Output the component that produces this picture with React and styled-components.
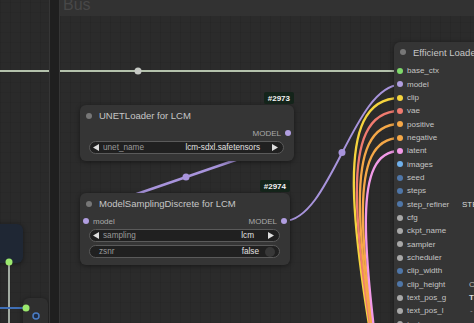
import React from "react";
import styled, { createGlobalStyle } from "styled-components";

const GlobalStyle = createGlobalStyle`
  html, body {
    margin: 0;
    padding: 0;
    background: #2a2a2a;
  }
  body {
    font-family: "Liberation Sans", Arial, sans-serif;
  }
`;

const Canvas = styled.div`
  position: relative;
  width: 474px;
  height: 323px;
  overflow: hidden;
  display: flex;
  background-color: #2a2a2a;
`;

const gridBg = `
  background-image:
    repeating-linear-gradient(90deg, rgba(0,0,0,0.07) 0 1px, transparent 1px 10px),
    repeating-linear-gradient(0deg, rgba(0,0,0,0.05) 0 1px, transparent 1px 10px);
`;

const LeftPane = styled.div`
  width: 49px;
  flex: none;
  ${gridBg}
`;

const Divider = styled.div`
  width: 9px;
  flex: none;
  background: #1f1f1f;
  border-left: 1px solid #363636;
  border-right: 1px solid #363636;
  position: relative;
  z-index: 4;
`;

const GroupArea = styled.div`
  flex: 1;
  display: flex;
  flex-direction: column;
  background: #2b2b2b;
  ${gridBg}
`;

const GroupTitle = styled.div`
  height: 16px;
  background: #323232;
  display: flex;
  align-items: flex-end;
  padding-left: 3px;
  overflow: hidden;
  font-size: 16px;
  line-height: 16px;
  color: #484848;
`;

const GroupLabel = styled.span`
  transform: translateY(-3px);
`;

const Links = styled.svg`
  position: absolute;
  left: 0;
  top: 0;
  z-index: ${(p) => p.$z ?? 1};
  pointer-events: none;
`;

const Node = styled.div`
  position: absolute;
  left: ${(p) => p.$x}px;
  top: ${(p) => p.$y}px;
  width: ${(p) => p.$w}px;
  height: ${(p) => (p.$h ? `${p.$h}px` : "auto")};
  box-sizing: border-box;
  background: ${(p) => p.$bg || "#353535"};
  border-radius: 6px;
  box-shadow: 0 1px 5px rgba(0, 0, 0, 0.45);
  display: flex;
  flex-direction: column;
  padding-bottom: ${(p) => p.$pb ?? 7}px;
  z-index: 2;
`;

const Badge = styled.div`
  position: absolute;
  right: 0;
  top: -13px;
  height: 12px;
  padding: 0 4px;
  display: flex;
  align-items: center;
  background: #14241a;
  color: #f2f2f2;
  font-size: 8px;
  font-weight: bold;
  border-radius: 2px;
`;

const Title = styled.div`
  height: ${(p) => p.$h ?? 21}px;
  display: flex;
  align-items: center;
  gap: 7px;
  padding-left: 6px;
  font-size: 9.5px;
  color: #c6c6c6;
  white-space: nowrap;
`;

const TitleDot = styled.span`
  width: 6px;
  height: 6px;
  border-radius: 50%;
  background: #777;
  flex: none;
`;

const SlotRow = styled.div`
  height: 14px;
  display: flex;
  align-items: center;
  justify-content: ${(p) => (p.$out ? "flex-end" : "space-between")};
  padding: 0 3px;
  font-size: 8px;
  color: #a9a9a9;
`;

const Slot = styled.span`
  display: flex;
  align-items: center;
  gap: 4px;
`;

const SlotDot = styled.span`
  width: 6px;
  height: 6px;
  border-radius: 50%;
  background: ${(p) => p.$c};
  flex: none;
`;

const Widgets = styled.div`
  display: flex;
  flex-direction: column;
  gap: 3px;
  padding: 1px 10px 0 9px;
`;

const Widget = styled.div`
  height: 13px;
  box-sizing: border-box;
  border: 1px solid #5a5a5a;
  border-radius: 7px;
  background: #202020;
  display: flex;
  align-items: center;
  gap: 4px;
  padding: 0 ${(p) => (p.$toggle ? 4 : 5)}px 0 ${(p) => (p.$toggle ? 9 : 3)}px;
  font-size: 8.2px;
  white-space: nowrap;
`;

const WLabel = styled.span`
  color: #9a9a9a;
`;

const WValue = styled.span`
  margin-left: auto;
  margin-right: ${(p) => p.$gap ?? 9}px;
  color: #e2e2e2;
`;

const Toggle = styled.span`
  width: 10px;
  height: 10px;
  border-radius: 50%;
  background: #383838;
  flex: none;
`;

const LoaderBody = styled.div`
  display: flex;
  flex-direction: column;
  padding: 2.33px 0 0 3px;
`;

const InputRow = styled.div`
  height: 13.33px;
  display: grid;
  grid-template-columns: 6px 51px auto;
  column-gap: 4px;
  align-items: center;
  font-size: 8px;
  color: #c4c4c4;
  white-space: nowrap;
`;

const Extra = styled.span`
  padding-left: ${(p) => p.$indent || 0}px;
  color: ${(p) => p.$c || "#dcdcdc"};
  font-weight: ${(p) => (p.$bold ? "bold" : "normal")};
`;

const Arrow = ({ dir }) => (
  <svg width="6" height="7" viewBox="0 0 6 7" style={{ flex: "none" }}>
    <path
      d={dir === "left" ? "M6 0 L0 3.5 L6 7 Z" : "M0 0 L6 3.5 L0 7 Z"}
      fill="#dedede"
    />
  </svg>
);

const C = {
  ctx: "#7fd96b",
  model: "#b09ee0",
  clip: "#f5d43e",
  vae: "#f07b70",
  cond: "#f5a848",
  latent: "#f29ae8",
  image: "#6fb0ec",
  int: "#4f76a8",
  misc: "#a8a8a8",
};

const loaderInputs = [
  { name: "base_ctx", c: C.ctx },
  { name: "model", c: C.model },
  { name: "clip", c: C.clip },
  { name: "vae", c: C.vae },
  { name: "positive", c: C.cond },
  { name: "negative", c: C.cond },
  { name: "latent", c: C.latent },
  { name: "images", c: C.image },
  { name: "seed", c: C.int },
  { name: "steps", c: C.int },
  { name: "step_refiner", c: C.int, extra: "STE" },
  { name: "cfg", c: C.misc },
  { name: "ckpt_name", c: C.misc },
  { name: "sampler", c: C.misc },
  { name: "scheduler", c: C.misc },
  { name: "clip_width", c: C.int },
  { name: "clip_height", c: C.int, extra: "C", indent: 7, ec: "#bdbdbd" },
  { name: "text_pos_g", c: C.misc, extra: "T", indent: 7, bold: true },
  { name: "text_pos_l", c: C.misc, extra: "-", indent: 8, ec: "#999" },
  { name: "text_neg_g", c: C.misc },
];

// bundle of links coming up from below into the loader
const bundle = [
  { y: 98, c: C.clip },
  { y: 111, c: C.vae },
  { y: 124, c: C.cond },
  { y: 138, c: C.cond },
  { y: 151, c: C.latent },
];

const App = () => {
  return (
    <>
      <GlobalStyle />
      <Canvas>
        <LeftPane />
        <Divider />
        <GroupArea>
          <GroupTitle>
            <GroupLabel>Bus</GroupLabel>
          </GroupTitle>
        </GroupArea>

        <Links width="474" height="323" viewBox="0 0 474 323">
          <line x1="0" y1="71" x2="400" y2="71" stroke="#b4c2ac" strokeWidth="2" />
          <circle cx="138" cy="71" r="3.5" fill="#c6c9c4" />

          <line x1="240" y1="158.5" x2="128" y2="197" stroke="#a894dc" strokeWidth="2.5" />
          <circle cx="186" cy="177" r="3.5" fill="#a894dc" />

          <path d="M284 221 C330 221 354 85 400 85" fill="none" stroke="#a894dc" strokeWidth="2" />
          <circle cx="342" cy="152.5" r="3.5" fill="#a894dc" />

          {bundle.map((b, k) => (
            <path
              key={k}
              d={`M400 ${b.y} C${330 + 5 * k} ${b.y} ${352 + 3 * k} ${230 + 5 * k} 385 420`}
              fill="none"
              stroke={b.c}
              strokeWidth="2.3"
            />
          ))}

          <line x1="9" y1="262" x2="9" y2="330" stroke="#a3aca2" strokeWidth="2" />
          <line x1="0" y1="308" x2="26" y2="308" stroke="#3f6fb6" strokeWidth="2" />
          <line x1="36" y1="316" x2="36" y2="330" stroke="#3f6fb6" strokeWidth="2" />
        </Links>

        <Node $x={-30} $y={224} $w={53} $h={39} $bg="#1f2734" $pb={0} />
        <Node $x={23} $y={298} $w={25} $h={40} $bg="#2f2f2f" $pb={0} />
        <Links width="474" height="323" viewBox="0 0 474 323" $z={3}>
          <circle cx="9" cy="262" r="3.5" fill="#9be86e" />
          <circle cx="26" cy="308" r="3.5" fill="#9be86e" />
          <circle cx="36" cy="316" r="3" fill="#1d2b44" stroke="#4a7cc4" strokeWidth="1.5" />
        </Links>

        <Node $x={80} $y={105} $w={214}>
          <Badge>#2973</Badge>
          <Title>
            <TitleDot />
            UNETLoader for LCM
          </Title>
          <SlotRow $out>
            <Slot>
              MODEL
              <SlotDot $c={C.model} />
            </Slot>
          </SlotRow>
          <Widgets>
            <Widget>
              <Arrow dir="left" />
              <WLabel>unet_name</WLabel>
              <WValue $gap={8}>lcm-sdxl.safetensors</WValue>
              <Arrow dir="right" />
            </Widget>
          </Widgets>
        </Node>

        <Node $x={80} $y={193} $w={210}>
          <Badge>#2974</Badge>
          <Title>
            <TitleDot />
            ModelSamplingDiscrete for LCM
          </Title>
          <SlotRow>
            <Slot>
              <SlotDot $c={C.model} />
              model
            </Slot>
            <Slot>
              MODEL
              <SlotDot $c={C.model} />
            </Slot>
          </SlotRow>
          <Widgets>
            <Widget>
              <Arrow dir="left" />
              <WLabel>sampling</WLabel>
              <WValue $gap={10}>lcm</WValue>
              <Arrow dir="right" />
            </Widget>
            <Widget $toggle>
              <WLabel>zsnr</WLabel>
              <WValue $gap={2}>false</WValue>
              <Toggle />
            </Widget>
          </Widgets>
        </Node>

        <Node $x={394} $y={42} $w={120}>
          <Title $h={20}>
            <TitleDot />
            Efficient Loader
          </Title>
          <LoaderBody>
            {loaderInputs.map((inp) => (
              <InputRow key={inp.name}>
                <SlotDot $c={inp.c} />
                <span>{inp.name}</span>
                {inp.extra ? (
                  <Extra $indent={inp.indent} $c={inp.ec} $bold={inp.bold}>
                    {inp.extra}
                  </Extra>
                ) : (
                  <span />
                )}
              </InputRow>
            ))}
          </LoaderBody>
        </Node>
      </Canvas>
    </>
  );
};

export default App;
